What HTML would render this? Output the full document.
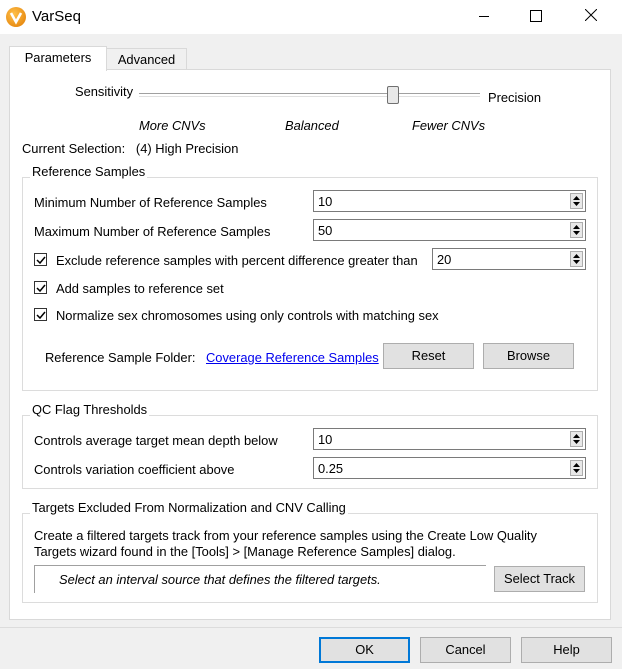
<!DOCTYPE html><html><head><style>
body{margin:0;width:622px;height:669px;background:#f0f0f0;font-family:"Liberation Sans",Tahoma,sans-serif;font-size:12.9px;color:#000;position:relative;overflow:hidden}
.a{position:absolute;white-space:nowrap}
.title{left:0;top:0;width:622px;height:34px;background:#fff}
.panel{left:9px;top:69px;width:602px;height:551px;background:#fff;border:1px solid #d9d9d9;box-sizing:border-box}
.grp{border:1px solid #dcdcdc;box-sizing:border-box}
.gt{background:#fff;padding:0 2px}
.inp{border:1px solid #7a7a7a;height:22px;box-sizing:border-box;background:#fff;padding:3px 4px}
.sp{position:absolute;right:2px;top:2px;width:13px;height:16px;border:1px solid #adadad;background:#e8e8e8;box-sizing:border-box}
.sp svg{position:absolute;left:0;top:0}
.btn{border:1px solid #adadad;background:#e1e1e1;box-sizing:border-box;text-align:center;line-height:22px}
.cb{width:13px;height:13px;border:1px solid #333;box-sizing:border-box;background:#fff}
.cb svg{position:absolute;left:0;top:0}
i{font-style:italic}
</style></head><body>
<div class="a title"></div>
<div class="a" style="left:6px;top:7px;width:20px;height:20px;border-radius:50%;background:radial-gradient(circle at 40% 35%,#ffc04a,#e07a00)"><svg width="20" height="20"><path d="M5 6 L10 15 L15 6" stroke="#fff" stroke-width="2.6" fill="none"/></svg></div>
<div class="a" style="left:32px;top:8px;font-size:15px">VarSeq</div>
<div class="a" style="left:479px;top:16px;width:10px;border-top:1px solid #000"></div>
<div class="a" style="left:530px;top:10px;width:10px;height:10px;border:1px solid #000"></div>
<svg class="a" style="left:585px;top:9px" width="12" height="12"><path d="M0 0L12 12M12 0L0 12" stroke="#000"/></svg>

<div class="a panel"></div>
<div class="a" style="left:106px;top:48px;width:81px;height:22px;background:#f0f0f0;border:1px solid #d9d9d9;box-sizing:border-box;text-align:center;line-height:22px">Advanced</div>
<div class="a" style="left:9px;top:46px;width:98px;height:25px;background:#fff;border:1px solid #d9d9d9;border-bottom:none;box-sizing:border-box;text-align:center;line-height:22px">Parameters</div>

<div class="a" style="left:75px;top:84px">Sensitivity</div>
<div class="a" style="left:139px;top:93px;width:341px;height:2px;border-top:1px solid #a0a0a0;border-bottom:1px solid #e0e0e0"></div>
<div class="a" style="left:387px;top:86px;width:10px;height:16px;background:#e8e8e8;border:1px solid #707070;border-radius:2px"></div>
<div class="a" style="left:488px;top:90px">Precision</div>
<div class="a" style="left:139px;top:118px"><i>More CNVs</i></div>
<div class="a" style="left:285px;top:118px"><i>Balanced</i></div>
<div class="a" style="left:412px;top:118px"><i>Fewer CNVs</i></div>
<div class="a" style="left:22px;top:141px">Current Selection:&nbsp;&nbsp; (4) High Precision</div>

<div class="a grp" style="left:22px;top:177px;width:576px;height:214px"></div>
<div class="a gt" style="left:30px;top:164px">Reference Samples</div>
<div class="a" style="left:34px;top:195px">Minimum Number of Reference Samples</div>
<div class="a inp" style="left:313px;top:190px;width:273px">10<div class="sp"><svg width="11" height="14"><path d="M2 6L5.5 2L9 6Z M2 8L5.5 12L9 8Z" fill="#000"/></svg></div></div>
<div class="a" style="left:34px;top:224px">Maximum Number of Reference Samples</div>
<div class="a inp" style="left:313px;top:219px;width:273px">50<div class="sp"><svg width="11" height="14"><path d="M2 6L5.5 2L9 6Z M2 8L5.5 12L9 8Z" fill="#000"/></svg></div></div>
<div class="a cb" style="left:34px;top:253px"><svg width="12" height="12"><path d="M2 6L5 9L10 3" stroke="#000" stroke-width="1.5" fill="none"/></svg></div>
<div class="a" style="left:56px;top:253px">Exclude reference samples with percent difference greater than</div>
<div class="a inp" style="left:432px;top:248px;width:154px">20<div class="sp"><svg width="11" height="14"><path d="M2 6L5.5 2L9 6Z M2 8L5.5 12L9 8Z" fill="#000"/></svg></div></div>
<div class="a cb" style="left:34px;top:281px"><svg width="12" height="12"><path d="M2 6L5 9L10 3" stroke="#000" stroke-width="1.5" fill="none"/></svg></div>
<div class="a" style="left:56px;top:281px">Add samples to reference set</div>
<div class="a cb" style="left:34px;top:308px"><svg width="12" height="12"><path d="M2 6L5 9L10 3" stroke="#000" stroke-width="1.5" fill="none"/></svg></div>
<div class="a" style="left:56px;top:308px">Normalize sex chromosomes using only controls with matching sex</div>
<div class="a" style="left:45px;top:350px">Reference Sample Folder:</div>
<div class="a" style="left:206px;top:350px;color:#0000ee;text-decoration:underline">Coverage Reference Samples</div>
<div class="a btn" style="left:383px;top:343px;width:91px;height:26px;line-height:24px">Reset</div>
<div class="a btn" style="left:483px;top:343px;width:91px;height:26px;line-height:24px">Browse</div>

<div class="a grp" style="left:22px;top:415px;width:576px;height:74px"></div>
<div class="a gt" style="left:30px;top:402px">QC Flag Thresholds</div>
<div class="a" style="left:34px;top:433px">Controls average target mean depth below</div>
<div class="a inp" style="left:313px;top:428px;width:273px">10<div class="sp"><svg width="11" height="14"><path d="M2 6L5.5 2L9 6Z M2 8L5.5 12L9 8Z" fill="#000"/></svg></div></div>
<div class="a" style="left:34px;top:462px">Controls variation coefficient above</div>
<div class="a inp" style="left:313px;top:457px;width:273px">0.25<div class="sp"><svg width="11" height="14"><path d="M2 6L5.5 2L9 6Z M2 8L5.5 12L9 8Z" fill="#000"/></svg></div></div>

<div class="a grp" style="left:22px;top:513px;width:576px;height:90px"></div>
<div class="a gt" style="left:30px;top:500px">Targets Excluded From Normalization and CNV Calling</div>
<div class="a" style="left:34px;top:528px;line-height:16px">Create a filtered targets track from your reference samples using the Create Low Quality<br>Targets wizard found in the [Tools] &gt; [Manage Reference Samples] dialog.</div>
<div class="a" style="left:34px;top:565px;width:451px;height:27px;border-top:1px solid #a0a0a0;border-left:1px solid #a0a0a0"></div>
<div class="a" style="left:59px;top:572px"><i>Select an interval source that defines the filtered targets.</i></div>
<div class="a btn" style="left:494px;top:566px;width:91px;height:26px;line-height:24px">Select Track</div>

<div class="a" style="left:0;top:627px;width:622px;border-top:1px solid #dcdcdc"></div>
<div class="a btn" style="left:319px;top:637px;width:91px;height:26px;border:2px solid #0078d7;line-height:22px">OK</div>
<div class="a btn" style="left:420px;top:637px;width:91px;height:26px;line-height:24px">Cancel</div>
<div class="a btn" style="left:521px;top:637px;width:91px;height:26px;line-height:24px">Help</div>
</body></html>
